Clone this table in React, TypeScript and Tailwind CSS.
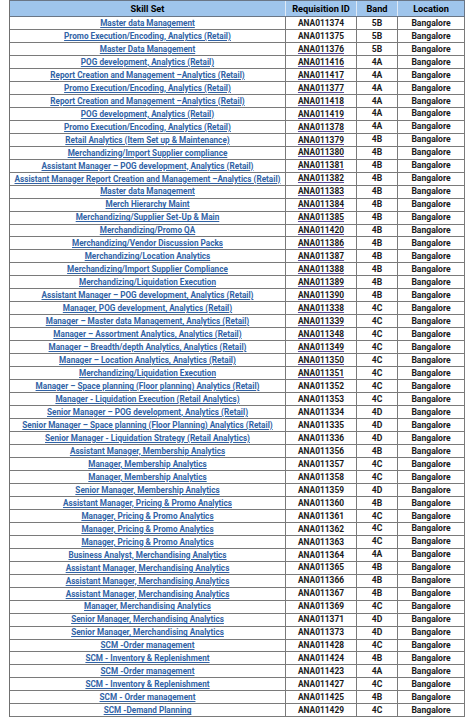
import React from "react";

type Row = [string, string, string, boolean];

const rows: Row[] = [
  ["Master data Management", "ANA011374", "5B", false],
  ["Promo Execution/Encoding, Analytics (Retail)", "ANA011375", "5B", false],
  ["Master Data Management", "ANA011376", "5B", true],
  ["POG development, Analytics (Retail)", "ANA011416", "4A", true],
  ["Report Creation and Management –Analytics (Retail)", "ANA011417", "4A", true],
  ["Promo Execution/Encoding, Analytics (Retail)", "ANA011377", "4A", true],
  ["Report Creation and Management –Analytics (Retail)", "ANA011418", "4A", true],
  ["POG development, Analytics (Retail)", "ANA011419", "4A", true],
  ["Promo Execution/Encoding, Analytics (Retail)", "ANA011378", "4A", true],
  ["Retail Analytics (Item Set up & Maintenance)", "ANA011379", "4B", true],
  ["Merchandizing/Import Supplier compliance", "ANA011380", "4B", true],
  ["Assistant Manager – POG development, Analytics (Retail)", "ANA011381", "4B", true],
  ["Assistant Manager Report Creation and Management –Analytics (Retail)", "ANA011382", "4B", true],
  ["Master data Management", "ANA011383", "4B", true],
  ["Merch Hierarchy Maint", "ANA011384", "4B", true],
  ["Merchandizing/Supplier Set-Up & Main", "ANA011385", "4B", true],
  ["Merchandizing/Promo QA", "ANA011420", "4B", true],
  ["Merchandizing/Vendor Discussion Packs", "ANA011386", "4B", true],
  ["Merchandizing/Location Analytics", "ANA011387", "4B", true],
  ["Merchandizing/Import Supplier Compliance", "ANA011388", "4B", true],
  ["Merchandizing/Liquidation Execution", "ANA011389", "4B", true],
  ["Assistant Manager – POG development, Analytics (Retail)", "ANA011390", "4B", true],
  ["Manager, POG development, Analytics (Retail)", "ANA011338", "4C", true],
  ["Manager – Master data Management, Analytics (Retail)", "ANA011339", "4C", true],
  ["Manager – Assortment Analytics, Analytics (Retail)", "ANA011348", "4C", true],
  ["Manager – Breadth/depth Analytics, Analytics (Retail)", "ANA011349", "4C", true],
  ["Manager – Location Analytics, Analytics (Retail)", "ANA011350", "4C", true],
  ["Merchandizing/Liquidation Execution", "ANA011351", "4C", true],
  ["Manager – Space planning (Floor planning) Analytics (Retail)", "ANA011352", "4C", false],
  ["Manager - Liquidation Execution (Retail Analytics)", "ANA011353", "4C", false],
  ["Senior Manager – POG development, Analytics (Retail)", "ANA011334", "4D", false],
  ["Senior Manager – Space planning (Floor Planning) Analytics (Retail)", "ANA011335", "4D", false],
  ["Senior Manager - Liquidation Strategy (Retail Analytics)", "ANA011336", "4D", false],
  ["Assistant Manager, Membership Analytics", "ANA011356", "4B", false],
  ["Manager, Membership Analytics", "ANA011357", "4C", false],
  ["Manager, Membership Analytics", "ANA011358", "4C", false],
  ["Senior Manager, Membership Analytics", "ANA011359", "4D", false],
  ["Assistant Manager, Pricing & Promo Analytics", "ANA011360", "4B", false],
  ["Manager, Pricing & Promo Analytics", "ANA011361", "4C", false],
  ["Manager, Pricing & Promo Analytics", "ANA011362", "4C", false],
  ["Manager, Pricing & Promo Analytics", "ANA011363", "4C", false],
  ["Business Analyst, Merchandising Analytics", "ANA011364", "4A", false],
  ["Assistant Manager, Merchandising Analytics", "ANA011365", "4B", false],
  ["Assistant Manager, Merchandising Analytics", "ANA011366", "4B", false],
  ["Assistant Manager, Merchandising Analytics", "ANA011367", "4B", false],
  ["Manager, Merchandising Analytics", "ANA011369", "4C", false],
  ["Senior Manager, Merchandising Analytics", "ANA011371", "4D", false],
  ["Senior Manager, Merchandising Analytics", "ANA011373", "4D", false],
  ["SCM -Order management", "ANA011428", "4C", false],
  ["SCM - Inventory & Replenishment", "ANA011424", "4B", false],
  ["SCM -Order management", "ANA011423", "4A", false],
  ["SCM - Inventory & Replenishment", "ANA011427", "4C", false],
  ["SCM - Order management", "ANA011425", "4B", false],
  ["SCM -Demand Planning", "ANA011429", "4C", false],
];

export default function App() {
  return (
    <div
      className="w-[474px] h-[718px] bg-white overflow-hidden pl-[9px]"
      style={{ fontFamily: "Roboto, 'Liberation Sans', sans-serif" }}
    >
      <div className="w-[456px] border-l border-[#707070]">
        <div className="grid grid-cols-[276px_71px_41px_67px] h-[17px] bg-[#9fc5ec] border-t border-b border-[#6a7686] text-[9.2px] font-bold text-black">
          <div className="flex items-center justify-center border-r border-[#dfe9f5]">Skill Set</div>
          <div className="flex items-center justify-center border-r border-[#dfe9f5]">Requisition ID</div>
          <div className="flex items-center justify-center border-r border-[#dfe9f5]">Band</div>
          <div className="flex items-center justify-center border-r border-[#6a7686]">Location</div>
        </div>
        {rows.map(([skill, id, band, link], i) => (
          <div
            key={i}
            className="grid grid-cols-[276px_71px_41px_67px] h-[12.97px] border-b border-[#7a7a7a] text-[8.6px] font-bold leading-none"
          >
            <div className="flex items-center justify-center border-r border-[#7a7a7a] overflow-hidden whitespace-nowrap text-[8.2px]">
              <span className="text-[#3163a6] underline decoration-[#3163a6] underline-offset-1">{skill}</span>
            </div>
            <div className="flex items-center justify-center border-r border-[#7a7a7a] text-[8.4px] text-[#1a1a1a]">
              <span className={link ? "underline decoration-[#5b4a9c] underline-offset-1" : ""}>{id}</span>
            </div>
            <div className="flex items-center justify-center border-r border-[#7a7a7a] text-[#1a1a1a]">{band}</div>
            <div className="flex items-center justify-center border-r border-[#7a7a7a] text-[#1a1a1a]">Bangalore</div>
          </div>
        ))}
      </div>
    </div>
  );
}
